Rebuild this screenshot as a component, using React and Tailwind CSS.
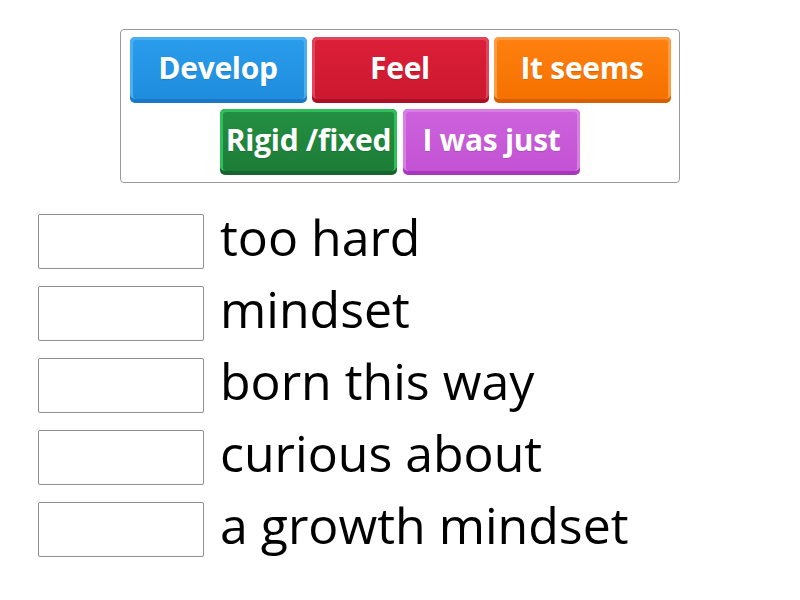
import React from "react";

const tiles = [
	{ label: "Develop", edge: "bg-[#4aaef3]", face: "from-[#2a9cec] to-[#1f8ddd]", base: "bg-[#1b78c6]" },
	{ label: "Feel", edge: "bg-[#e2455b]", face: "from-[#dc1f38] to-[#cc1830]", base: "bg-[#aa1127]" },
	{ label: "It seems", edge: "bg-[#ff9b40]", face: "from-[#ff800f] to-[#f57100]", base: "bg-[#d66000]" },
	{ label: "Rigid /fixed", edge: "bg-[#2fc05b]", face: "from-[#238f41] to-[#1d7d38]", base: "bg-[#17652d]" },
	{ label: "I was just", edge: "bg-[#d77fe3]", face: "from-[#cd62dc] to-[#c352d4]", base: "bg-[#a836ba]" },
];

const prompts = ["too hard", "mindset", "born this way", "curious about", "a growth mindset"];

function Tile({ tile }) {
	return (
		<div className={`w-[177px] h-[66px] rounded-[5px] ${tile.base} pb-[4px]`}>
			<div className={`h-full rounded-[5px] ${tile.edge} p-[3px] pb-0`}>
				<div
					className={`h-full rounded-[3px] bg-gradient-to-b ${tile.face} flex items-center justify-center pb-[4px] text-white font-bold text-[30px] leading-none tracking-[-0.3px] [text-shadow:0_1px_1px_rgba(0,0,0,0.12)]`}
				>
					{tile.label}
				</div>
			</div>
		</div>
	);
}

export default function App() {
	return (
		<div className="w-[800px] h-[600px] bg-white font-['Open_Sans',sans-serif] text-black">
			<div className="pt-[29px] flex justify-center">
				<div className="w-[560px] border border-[#9a9a9a] rounded-[4px] px-[7px] py-[7px] flex flex-col gap-[6px]">
					<div className="flex justify-center gap-[5px]">
						{tiles.slice(0, 3).map((t) => (
							<Tile key={t.label} tile={t} />
						))}
					</div>
					<div className="flex justify-center gap-[6px]">
						{tiles.slice(3).map((t) => (
							<Tile key={t.label} tile={t} />
						))}
					</div>
				</div>
			</div>
			<div className="mt-[31px] pl-[38px] flex flex-col gap-[17px]">
				{prompts.map((p) => (
					<div key={p} className="flex items-center gap-[16px] h-[55px]">
						<div className="w-[166px] h-[55px] border border-[#8f8f8f] rounded-[2px] bg-white shrink-0" />
						<span className="text-[50px] leading-none pb-[10px] whitespace-nowrap">{p}</span>
					</div>
				))}
			</div>
		</div>
	);
}
